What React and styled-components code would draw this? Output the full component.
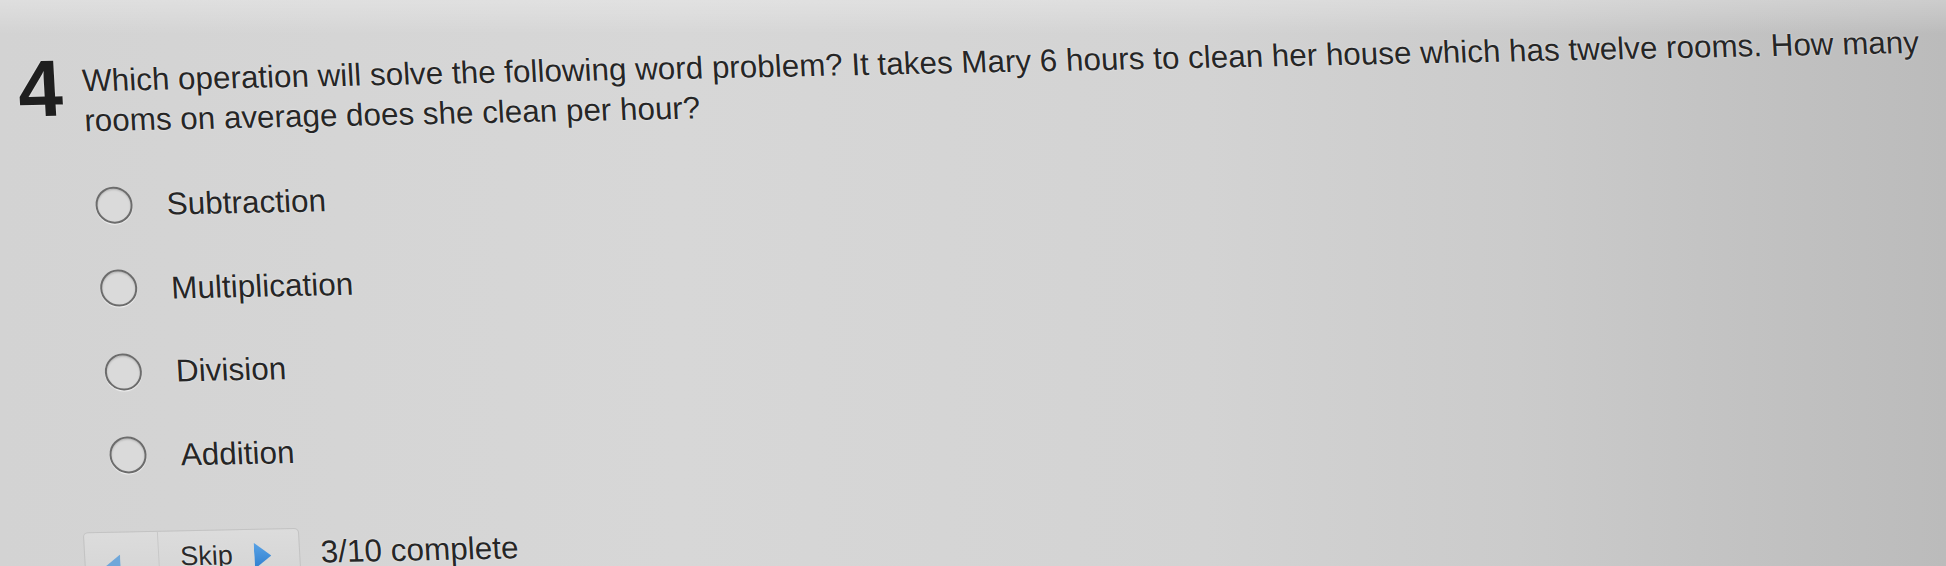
import React from "react";
import styled, { createGlobalStyle } from "styled-components";

const GlobalStyle = createGlobalStyle`
  html, body {
    margin: 0;
    padding: 0;
  }
  body {
    width: 1946px;
    height: 566px;
    overflow: hidden;
    font-family: "Liberation Sans", Arial, sans-serif;
    color: #262626;
    background:
      linear-gradient(to bottom, rgba(255, 255, 255, 0.26) 0, rgba(255, 255, 255, 0.16) 14px, rgba(255, 255, 255, 0) 34px),
      linear-gradient(to right, #d3d3d3 0%, #d7d7d7 35%, #d3d3d3 62%, #cbcbcb 78%, #c2c2c2 90%, #bbbbbb 100%);
  }
`;

const Page = styled.main`
  padding: 50px 0 0 13px;
  transform-origin: 0 0;
  transform: rotate(-1.2deg) skewX(2deg);
  text-shadow: 0 0 2px rgba(255, 255, 255, 0.7);
`;

const Question = styled.section`
  display: flex;
  align-items: flex-start;
`;

const Number = styled.div`
  font-size: 80px;
  font-weight: 700;
  line-height: 1;
  color: #1f1f1f;
`;

const Prompt = styled.p`
  flex: 1;
  margin: 13px 0 0 20px;
  padding-right: 10px;
  font-size: 31.4px;
  line-height: 40px;
`;

const Options = styled.ul`
  list-style: none;
  margin: 22.5px 0 0;
  padding: 0 0 0 71px;
`;

const Option = styled.li`
  display: flex;
  align-items: center;
  gap: 34px;
  height: 83.5px;
`;

const Radio = styled.span`
  box-sizing: border-box;
  width: 37px;
  height: 37px;
  border-radius: 50%;
  border: 2px solid #6c6c6c;
  background: #dadada;
  box-shadow: inset 0 1px 2px rgba(0, 0, 0, 0.18), 0 1px 1px rgba(255, 255, 255, 0.7);
`;

const Label = styled.span`
  font-size: 31.5px;
  line-height: 34px;
`;

const Footer = styled.div`
  display: flex;
  align-items: flex-start;
  margin-top: 34.5px;
  padding-left: 40px;
`;

const ButtonGroup = styled.div`
  display: flex;
  height: 60px;
  border: 1px solid #c3c3c3;
  border-radius: 5px;
  background: linear-gradient(to bottom, #dcdcdc, #d3d3d3);
`;

const NavButton = styled.div`
  display: flex;
  align-items: flex-start;
  box-sizing: border-box;
  width: ${(p) => (p.$width ? `${p.$width}px` : "auto")};
  gap: ${(p) => p.$gap || 0}px;
  padding: ${(p) => p.$pad};
  border-left: ${(p) => (p.$divider ? "1px solid #c8c8c8" : "none")};
  font-size: 27px;
  line-height: 30px;
  color: #2a2a2a;
`;

const Arrow = styled.svg`
  display: block;
  margin-top: ${(p) => p.$top}px;
`;

const Progress = styled.span`
  margin: 7px 0 0 21px;
  font-size: 31.5px;
  line-height: 34px;
`;

const options = ["Subtraction", "Multiplication", "Division", "Addition"];

export default function App() {
  return (
    <>
      <GlobalStyle />
      <Page>
        <Question>
          <Number>4</Number>
          <Prompt>
            Which operation will solve the following word problem? It takes Mary 6 hours to clean her
            house which has twelve rooms. How many rooms on average does she clean per hour?
          </Prompt>
        </Question>
        <Options>
          {options.map((o) => (
            <Option key={o}>
              <Radio />
              <Label>{o}</Label>
            </Option>
          ))}
        </Options>
        <Footer>
          <ButtonGroup>
            <NavButton $width={73} $pad="0 0 0 18px">
              <Arrow $top={22} width="17" height="26" viewBox="0 0 17 26">
                <polygon points="17,0 17,26 0,13" fill="#6fa7da" />
              </Arrow>
            </NavButton>
            <NavButton $divider $pad="10px 28px 0 21px" $gap={21}>
              <span>Skip</span>
              <Arrow $top={3} width="17" height="26" viewBox="0 0 17 26">
                <defs>
                  <linearGradient id="rg" x1="0" y1="0" x2="0" y2="1">
                    <stop offset="0" stopColor="#5aa3e6" />
                    <stop offset="1" stopColor="#2f7fcf" />
                  </linearGradient>
                </defs>
                <polygon points="0,0 17,13 0,26" fill="url(#rg)" />
              </Arrow>
            </NavButton>
          </ButtonGroup>
          <Progress>3/10 complete</Progress>
        </Footer>
      </Page>
    </>
  );
}
